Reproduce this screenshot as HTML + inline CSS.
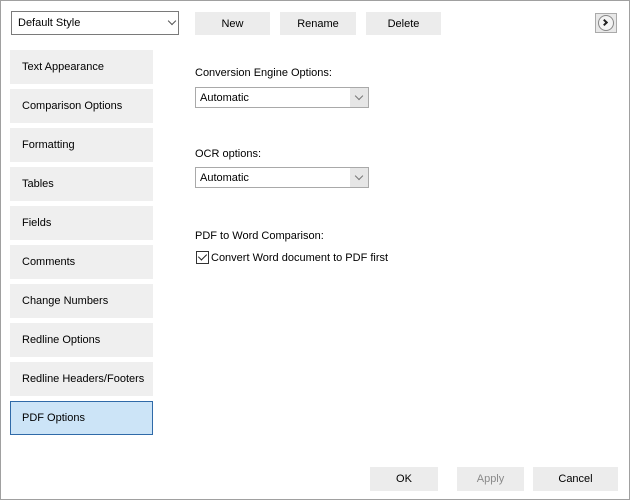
<html><head><style>
*{box-sizing:border-box}
body{margin:0;width:630px;height:500px;background:#fff;font-family:"Liberation Sans",sans-serif;font-size:11px;color:#000;position:relative;overflow:hidden}
.frame{position:absolute;left:0;top:0;width:630px;height:500px;border:1px solid #a0a0a0}
.a{position:absolute}
.btn{position:absolute;background:#ececec;text-align:center;line-height:24px}
.side{position:absolute;left:10px;width:143px;height:34px;background:#efefef;line-height:35px;padding-left:12px}
.combo{position:absolute;border:1px solid #a9a9a9;background:#fff;padding-left:4px}
.dd{position:absolute;right:0;top:0;bottom:0;width:18px;background:#e6e6e6}
.chev{position:absolute;width:6px;height:6px;border-right:1px solid #555;border-bottom:1px solid #555;transform:rotate(45deg)}
</style></head><body>
<div class="frame"></div>
<div class="combo" style="left:11px;top:11px;width:168px;height:24px;border-color:#7a7a7a;line-height:23px;padding-left:6px">Default Style<div class="chev" style="left:157px;top:6px"></div></div>
<div class="btn" style="left:195px;top:12px;width:75px;height:23px">New</div>
<div class="btn" style="left:280px;top:12px;width:76px;height:23px">Rename</div>
<div class="btn" style="left:366px;top:12px;width:75px;height:23px">Delete</div>
<div class="a" style="left:595px;top:13px;width:22px;height:20px;border:1px solid #aaa;background:#e8e8e8"><div class="a" style="left:2px;top:1px;width:16px;height:16px;border-radius:50%;border:1px solid #888;background:#f4f4f4"></div><div class="a" style="left:6px;top:6px;width:5px;height:5px;border-right:2px solid #222;border-top:2px solid #222;transform:rotate(45deg)"></div></div>

<div class="side" style="top:50px">Text Appearance</div>
<div class="side" style="top:89px">Comparison Options</div>
<div class="side" style="top:128px">Formatting</div>
<div class="side" style="top:167px">Tables</div>
<div class="side" style="top:206px">Fields</div>
<div class="side" style="top:245px">Comments</div>
<div class="side" style="top:284px">Change Numbers</div>
<div class="side" style="top:323px">Redline Options</div>
<div class="side" style="top:362px">Redline Headers/Footers</div>
<div class="side" style="top:401px;background:#cce4f7;border:1px solid #2f6aa8;line-height:33px;padding-left:11px">PDF Options</div>

<div class="a" style="left:195px;top:67px">Conversion Engine Options:</div>
<div class="combo" style="left:195px;top:87px;width:174px;height:21px;line-height:20px">Automatic<div class="dd"><div class="chev" style="left:6px;top:5px;border-color:#777"></div></div></div>
<div class="a" style="left:195px;top:148px">OCR options:</div>
<div class="combo" style="left:195px;top:167px;width:174px;height:21px;line-height:20px">Automatic<div class="dd"><div class="chev" style="left:6px;top:5px;border-color:#777"></div></div></div>
<div class="a" style="left:195px;top:230px">PDF to Word Comparison:</div>
<div class="a" style="left:196px;top:251px;width:13px;height:13px;border:1px solid #333;background:#fff"><div class="a" style="left:3px;top:0px;width:5px;height:8px;border-right:1.5px solid #222;border-bottom:1.5px solid #222;transform:rotate(45deg)"></div></div>
<div class="a" style="left:211px;top:252px">Convert Word document to PDF first</div>

<div class="btn" style="left:370px;top:467px;width:68px;height:24px;line-height:25px">OK</div>
<div class="btn" style="left:457px;top:467px;width:67px;height:24px;line-height:25px;color:#8a8a8a">Apply</div>
<div class="btn" style="left:533px;top:467px;width:85px;height:24px;line-height:25px">Cancel</div>
</body></html>
